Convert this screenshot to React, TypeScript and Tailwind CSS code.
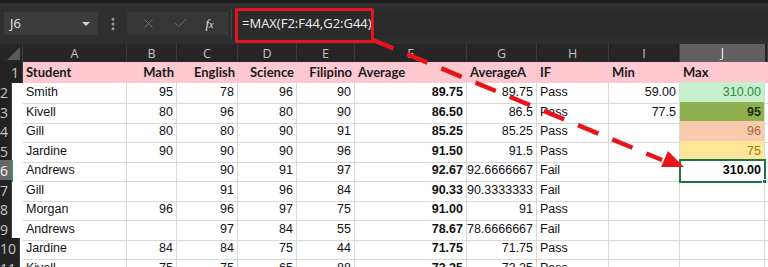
import { X, Check, EllipsisVertical } from "lucide-react";

type Cell = { v: string; right?: boolean };

const cols = "grid grid-cols-[23px_104px_50px_61px_59px_58px_112px_70px_72px_71px_85px_1fr]";

const colHeads = ["A", "B", "C", "D", "E", "F", "G", "H", "I", "J", ""];

const headRow = ["Student", "Math", "English", "Science", "Filipino", "Average", "AverageA", "IF", "Min", "Max", ""];
const headRight = [false, true, true, true, true, false, false, false, false, false, false];

const rows: string[][] = [
  ["Smith", "95", "78", "96", "90", "89.75", "89.75", "Pass", "59.00", "310.00"],
  ["Kivell", "80", "96", "80", "90", "86.50", "86.5", "Pass", "77.5", "95"],
  ["Gill", "80", "80", "90", "91", "85.25", "85.25", "Pass", "", "96"],
  ["Jardine", "90", "90", "90", "96", "91.50", "91.5", "Pass", "", "75"],
  ["Andrews", "", "90", "91", "97", "92.67", "92.6666667", "Fail", "", "310.00"],
  ["Gill", "", "91", "96", "84", "90.33", "90.3333333", "Fail", "", ""],
  ["Morgan", "96", "96", "97", "75", "91.00", "91", "Pass", "", ""],
  ["Andrews", "", "97", "84", "55", "78.67", "78.6666667", "Fail", "", ""],
  ["Jardine", "84", "84", "75", "44", "71.75", "71.75", "Pass", "", ""],
  ["Kivell", "75", "75", "65", "88", "73.25", "73.25", "Pass", "", ""],
];

// fills on the Max column (conditional formatting look)
const maxStyle: Record<number, string> = {
  0: "bg-[#c6efce] text-[#2f8a3c]",
  1: "bg-[#8fb04f] text-[#1c2e0c] font-bold",
  2: "bg-[#f8cbad] text-[#a8673a]",
  3: "bg-[#ffe699] text-[#a07a10]",
  4: "bg-white text-black font-bold",
};

const FormulaBar = () => (
  <div className="relative h-[44px] bg-[#2f2f2f] border-t-[3px] border-[#1e1e1e] flex items-center">
    <div className="ml-[4px] w-[94px] h-[23px] bg-[#3b3b3b] flex items-center justify-between pl-[6px] pr-[8px] text-[13px] text-[#e6e6e6] font-['Open_Sans',sans-serif]">
      <span>J6</span>
      <span className="w-0 h-0 border-l-[4px] border-r-[4px] border-t-[4px] border-l-transparent border-r-transparent border-t-[#d0d0d0]" />
    </div>
    <div className="w-[29px] flex justify-center text-[#9a9a9a]">
      <EllipsisVertical size={16} strokeWidth={2.5} />
    </div>
    <div className="w-[101px] h-[23px] bg-[#363636] flex items-center justify-around px-[6px]">
      <X size={15} className="text-[#6e6e6e]" strokeWidth={1.6} />
      <Check size={15} className="text-[#6e6e6e]" strokeWidth={1.6} />
      <span className="text-[13px] italic text-[#e0e0e0] font-['Liberation_Serif',serif]">
        f<span className="text-[10px]">x</span>
      </span>
    </div>
    <div className="ml-[3px] flex-1 h-[30px] bg-[#2b2b2b] border-l border-[#444] flex items-center pl-[10px] text-[13px] text-[#f0f0f0] font-['Open_Sans',sans-serif]">
      =MAX(F2:F44,G2:G44)
    </div>
  </div>
);

const ColumnHeader = () => (
  <div className={`${cols} h-[18px] bg-[#262626] font-['Open_Sans',sans-serif] text-[12.5px] text-[#c4c4c4]`}>
    <div className="relative border-r border-[#3c3c3c]">
      <span className="absolute right-[3px] bottom-[2px] w-0 h-0 border-l-[12px] border-t-[12px] border-l-transparent border-t-transparent border-b-0 border-r-0" />
      <svg className="absolute left-[7px] top-[3px]" width="13" height="13" viewBox="0 0 13 13">
        <polygon points="13,0 13,13 0,13" fill="#5a5a5a" />
      </svg>
    </div>
    {colHeads.map((c, i) =>
      c === "J" ? (
        <div key={i} className="flex items-center justify-center bg-[#606060] text-[#f2f2f2] border-b-2 border-[#3f8f58]">
          {c}
        </div>
      ) : (
        <div key={i} className="flex items-center justify-center border-r border-[#3c3c3c] leading-none">
          {c}
        </div>
      )
    )}
  </div>
);

const RowNum = ({ n }: { n: number }) => (
  <div
    className={
      n === 6
        ? "flex items-center justify-end pr-[3px] bg-[#676767] text-[#f5f5f5] border-r-2 border-[#3f8f58] border-b border-b-[#444]"
        : "flex items-center justify-end pr-[3px] bg-[#222222] text-[#c8c8c8] border-r border-[#3c3c3c] border-b border-b-[#3a3a3a]"
    }
  >
    {n}
  </div>
);

const App = () => {
  return (
    <div className="relative w-[768px] h-[267px] overflow-hidden bg-white">
      <FormulaBar />
      <ColumnHeader />

      <div className="font-['Liberation_Sans',Arial,sans-serif] text-[12.5px] text-[#111]">
        {/* header row 1 */}
        <div className={`${cols} h-[20px]`}>
          <div className="flex items-center justify-end pr-[3px] bg-[#222222] text-[#c8c8c8] border-r border-[#3c3c3c] font-['Open_Sans',sans-serif] text-[14px]">
            1
          </div>
          {headRow.map((h, i) => (
            <div
              key={i}
              className={`flex items-center bg-[#fdc8cf] font-['Lato',sans-serif] font-bold text-[13px] text-[#1a1a1a] px-[3px] ${
                headRight[i] ? "justify-end" : "justify-start"
              }`}
            >
              {h}
            </div>
          ))}
        </div>

        {rows.map((r, ri) => (
          <div key={ri} className={`${cols} h-[19.5px]`}>
            <div className="font-['Open_Sans',sans-serif] text-[14px] flex">
              <RowNum n={ri + 2} />
            </div>
            {r.map((v, ci) => {
              let cls = "flex items-center px-[3px] border-r border-b border-[#d9d9d9] whitespace-nowrap overflow-visible";
              const cell: Cell = { v, right: ci > 0 && ci !== 7 };
              if (ci === 0 || ci === 7) cls += " justify-start";
              else cls += " justify-end";
              if (ci === 5) cls += " font-bold";
              if (ci === 9 && maxStyle[ri]) cls += " " + maxStyle[ri];
              if (ci === 9 && ri === 4) cls += " relative outline outline-2 outline-[#217346] -outline-offset-1";
              return (
                <div key={ci} className={cls}>
                  {cell.v}
                  {ci === 9 && ri === 4 && (
                    <span className="absolute -right-[3px] -bottom-[3px] w-[5px] h-[5px] bg-[#217346] border border-white" />
                  )}
                </div>
              );
            })}
            <div className="border-b border-[#d9d9d9]" />
          </div>
        ))}
      </div>

      {/* annotation overlay: red box round the formula and dashed arrow to J6 */}
      <div className="absolute left-[235px] top-[8px] w-[139px] h-[35px] border-[3px] border-[#e3161e] rounded-[2px]" />
      <svg className="absolute left-0 top-0 pointer-events-none" width="768" height="267" viewBox="0 0 768 267">
        <line
          x1="373"
          y1="40"
          x2="662"
          y2="160"
          stroke="#e8141c"
          strokeWidth="4.5"
          strokeDasharray="22 15"
        />
        <polygon points="684,167 661,167 668,151" fill="#e8141c" />
      </svg>
    </div>
  );
};

export default App;
